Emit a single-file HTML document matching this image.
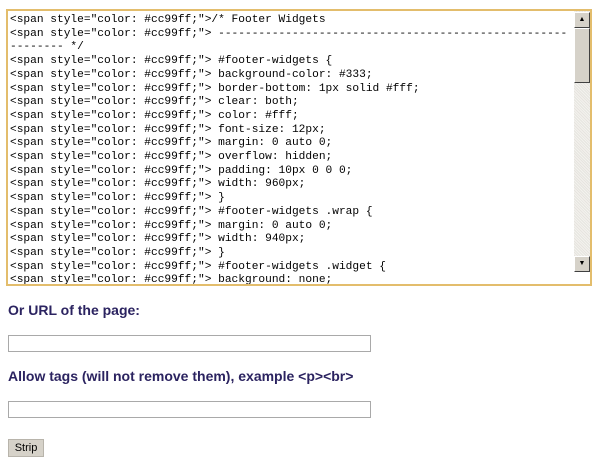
<!DOCTYPE html>
<html><head><style>
body{margin:0;width:600px;height:467px;background:#fff;position:relative;overflow:hidden;font-family:"Liberation Sans",Arial,sans-serif}
.ta{position:absolute;left:6px;top:9px;width:582px;height:273px;border:2px solid #e3bd6c;background:#fff;overflow:hidden}
pre{margin:0;position:absolute;left:2px;top:3px;font-family:"Liberation Mono","Courier New",monospace;font-size:11.2px;line-height:13.7px;color:#000}
.sb{position:absolute;right:0;top:0;width:16px;height:273px;background:repeating-linear-gradient(45deg,#e6e4df 0 1px,#f3f2ee 1px 2px)}
.btn{position:absolute;left:0;width:14px;height:14px;background:#d6d2c9;border:1px solid;border-color:#fff #404040 #404040 #fff;font-size:7px;text-align:center;line-height:14px}
.grip{position:absolute;right:0;bottom:0;width:16px;height:12px;background:#fff}
h3{position:absolute;left:8px;margin:0;font-size:14px;font-weight:bold;color:#2b2360}
.in{position:absolute;left:8px;width:361px;height:15px;border:1px solid #a9a9a9;background:#fff}
.st{position:absolute;left:8px;top:439px;width:34px;height:16px;background:#d6d2c9;border:1px solid #b8b4ab;font-size:11px;line-height:16px;text-align:center;color:#000}
</style></head><body>
<div class="ta"><pre>&lt;span style="color: #cc99ff;"&gt;/* Footer Widgets
&lt;span style="color: #cc99ff;"&gt; ----------------------------------------------------
-------- */
&lt;span style="color: #cc99ff;"&gt; #footer-widgets {
&lt;span style="color: #cc99ff;"&gt; background-color: #333;
&lt;span style="color: #cc99ff;"&gt; border-bottom: 1px solid #fff;
&lt;span style="color: #cc99ff;"&gt; clear: both;
&lt;span style="color: #cc99ff;"&gt; color: #fff;
&lt;span style="color: #cc99ff;"&gt; font-size: 12px;
&lt;span style="color: #cc99ff;"&gt; margin: 0 auto 0;
&lt;span style="color: #cc99ff;"&gt; overflow: hidden;
&lt;span style="color: #cc99ff;"&gt; padding: 10px 0 0 0;
&lt;span style="color: #cc99ff;"&gt; width: 960px;
&lt;span style="color: #cc99ff;"&gt; }
&lt;span style="color: #cc99ff;"&gt; #footer-widgets .wrap {
&lt;span style="color: #cc99ff;"&gt; margin: 0 auto 0;
&lt;span style="color: #cc99ff;"&gt; width: 940px;
&lt;span style="color: #cc99ff;"&gt; }
&lt;span style="color: #cc99ff;"&gt; #footer-widgets .widget {
&lt;span style="color: #cc99ff;"&gt; background: none;</pre>
<div class="sb">
<div class="btn" style="top:1px">▲</div>
<div class="btn" style="top:17px;height:53px"></div>
<div class="btn" style="top:245px">▼</div>
<div class="grip"></div>
</div></div>
<h3 style="top:302px">Or URL of the page:</h3>
<div class="in" style="top:335px"></div>
<h3 style="top:368px">Allow tags (will not remove them), example &lt;p&gt;&lt;br&gt;</h3>
<div class="in" style="top:401px"></div>
<div class="st">Strip</div>
</body></html>
